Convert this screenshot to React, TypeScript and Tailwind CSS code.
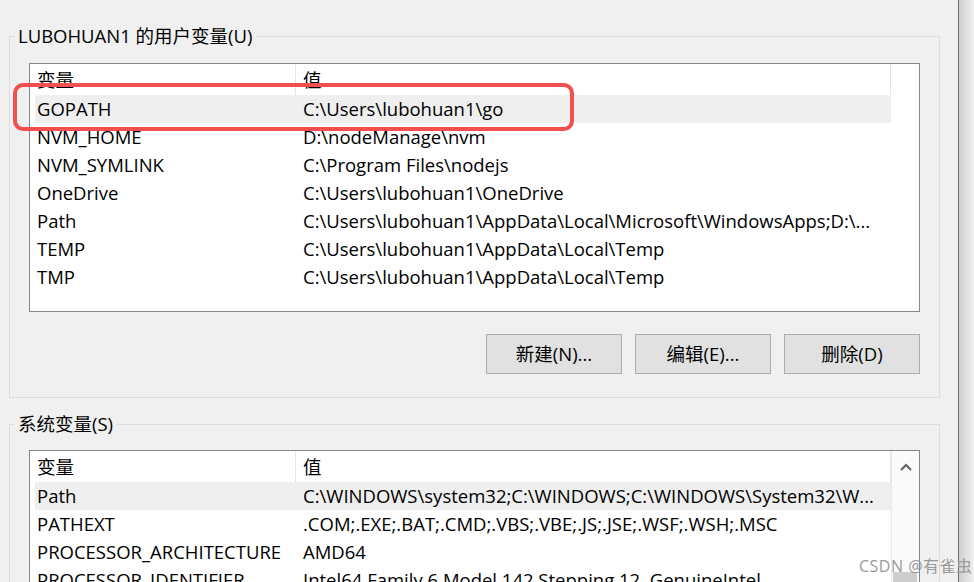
import React from "react";

const FONT = "font-['Open_Sans','Noto_Sans_CJK_SC',sans-serif]";

type Row = { name: string; value: string; selected?: boolean };

const userRows: Row[] = [
  { name: "GOPATH", value: "C:\\Users\\lubohuan1\\go", selected: true },
  { name: "NVM_HOME", value: "D:\\nodeManage\\nvm" },
  { name: "NVM_SYMLINK", value: "C:\\Program Files\\nodejs" },
  { name: "OneDrive", value: "C:\\Users\\lubohuan1\\OneDrive" },
  { name: "Path", value: "C:\\Users\\lubohuan1\\AppData\\Local\\Microsoft\\WindowsApps;D:\\..." },
  { name: "TEMP", value: "C:\\Users\\lubohuan1\\AppData\\Local\\Temp" },
  { name: "TMP", value: "C:\\Users\\lubohuan1\\AppData\\Local\\Temp" },
];

const sysRows: Row[] = [
  { name: "Path", value: "C:\\WINDOWS\\system32;C:\\WINDOWS;C:\\WINDOWS\\System32\\W...", selected: true },
  { name: "PATHEXT", value: ".COM;.EXE;.BAT;.CMD;.VBS;.VBE;.JS;.JSE;.WSF;.WSH;.MSC" },
  { name: "PROCESSOR_ARCHITECTURE", value: "AMD64" },
  { name: "PROCESSOR_IDENTIFIER", value: "Intel64 Family 6 Model 142 Stepping 12, GenuineIntel" },
  { name: "PROCESSOR_LEVEL", value: "6" },
];

function ListView({ rows, scroll, height }: { rows: Row[]; scroll?: boolean; height: string }) {
  return (
    <div className={`flex w-[891px] border border-[#828790] bg-white ${height}`}>
      <div className="flex w-[861px] flex-col">
        <div className="flex h-[31px] items-center">
          <div className="flex h-full w-[266px] items-center border-r border-[#e5e5e5] pl-[7px]">变量</div>
          <div className="flex h-full flex-1 items-center border-r border-[#e5e5e5] pl-[7px]">值</div>
        </div>
        <div className="flex flex-col pl-[5px]">
          {rows.map((r) => (
            <div
              key={r.name}
              className={`flex h-[28px] items-center whitespace-nowrap ${r.selected ? "bg-[#efefef]" : ""}`}
            >
              <div className="w-[261px] overflow-hidden pl-[2px]">{r.name}</div>
              <div className="flex-1 overflow-hidden pl-[7px]">{r.value}</div>
            </div>
          ))}
        </div>
      </div>
      {scroll ? (
        <div className="flex w-[28px] flex-col border-l border-[#e8e8e8] bg-[#fafafa]">
          <div className="flex h-[32px] items-center justify-center">
            <svg width="12" height="8" viewBox="0 0 12 8">
              <path d="M1 7 L6 2 L11 7" fill="none" stroke="#606060" strokeWidth="2" />
            </svg>
          </div>
          <div className="ml-[1px] mt-[89px] h-[80px] w-[24px] bg-[#cdcdcd]" />
        </div>
      ) : (
        <div className="w-[28px]" />
      )}
    </div>
  );
}

function Btn({ label }: { label: string }) {
  return (
    <div className="flex h-[40px] w-[136px] items-center justify-center border border-[#adadad] bg-[#e1e1e1]">
      {label}
    </div>
  );
}

export default function App() {
  return (
    <div className={`relative flex h-[582px] w-[974px] overflow-hidden bg-[#f0f0f0] text-[18.5px] text-black ${FONT}`}>
      <div className="flex w-[958px] flex-col pl-[9px] pt-[24px]">
        <fieldset className="w-[931px] border border-[#dcdcdc] px-[5px] pb-[23px]">
          <legend className="h-[24px] px-[3px] leading-[24px]">LUBOHUAN1 的用户变量(U)</legend>
          <div className="flex flex-col pl-[14px] pt-[15px]">
            <ListView rows={userRows} height="h-[249px]" />
            <div className="mt-[22px] flex w-[891px] justify-end gap-[13px]">
              <Btn label="新建(N)..." />
              <Btn label="编辑(E)..." />
              <Btn label="删除(D)" />
            </div>
          </div>
        </fieldset>
        <fieldset className="mt-[14px] w-[931px] border border-[#dcdcdc] px-[5px] pb-[23px]">
          <legend className="h-[24px] px-[3px] leading-[24px]">系统变量(S)</legend>
          <div className="flex flex-col pl-[14px] pt-[14px]">
            <ListView rows={sysRows} scroll height="h-[240px]" />
          </div>
        </fieldset>
      </div>
      <div className="w-[1px] bg-[#6e6e6e]" />
      <div className="flex-1 bg-gradient-to-r from-[#cfcfcf] to-[#f0f0f0]" />

      {/* red highlight */}
      <div className="pointer-events-none absolute left-[13px] top-[83px] h-[48px] w-[561px] rounded-[10px] border-[4px] border-[#f24f4f]" />

      {/* faint watermarks */}
      {[25, 315].map((y) =>
        [-62, 178, 418, 658, 898].map((x) => (
          <div
            key={`${x}-${y}`}
            className="pointer-events-none absolute font-['Liberation_Serif',serif] text-[13px] font-bold italic text-black/[0.02]"
            style={{ left: x, top: y - 8 }}
          >
            LUBOHUAN1
          </div>
        ))
      )}

      <div className="pointer-events-none absolute left-[859px] top-[554px] text-[16px] tracking-[0.5px] text-[#9a9a9a]">
        CSDN @有雀虫
      </div>
    </div>
  );
}
